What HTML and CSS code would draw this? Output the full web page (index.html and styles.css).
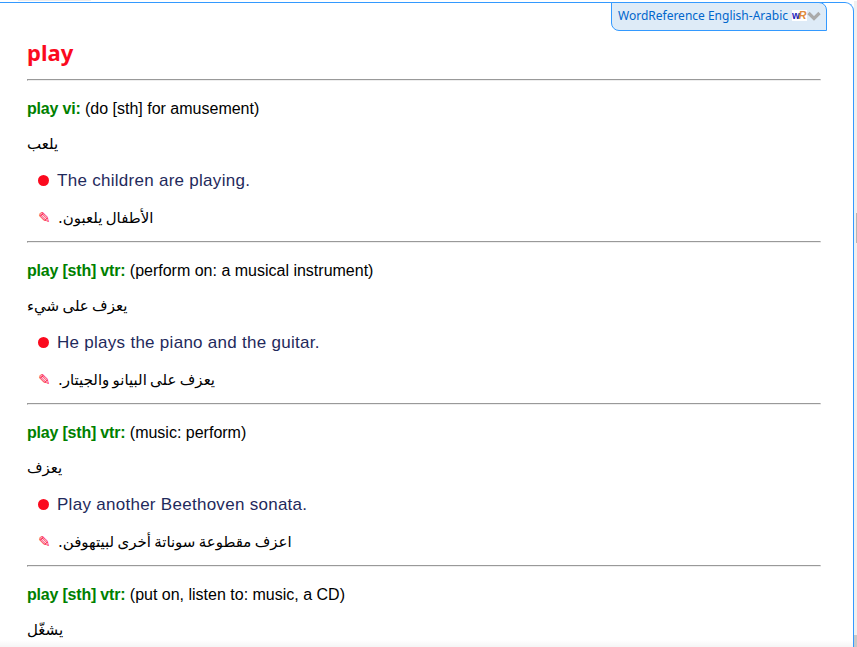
FILE: index.html
```
<!DOCTYPE html>
<html lang="en">
<head>
    <meta charset="UTF-8">
    <title>play - WordReference English-Arabic</title>
    <link rel="stylesheet" href="styles.css">
</head>
<body>
    <div class="top-strip"></div>
    <div class="article-box">
        <div class="dict-label">
            <span>WordReference English-Arabic</span>
            <svg class="dict-icon" width="15" height="11" viewBox="0 0 15 11">
                <rect width="15" height="11" fill="#fff"/>
                <text x="0" y="8.5" class="icon-w">w</text>
                <text x="6.5" y="9" class="icon-r">R</text>
            </svg>
            <svg class="arrow" width="14" height="10" viewBox="0 0 14 10">
                <path d="M1.5 2 L7 7.5 L12.5 2" fill="none" stroke="#aaa" stroke-width="3.2"/>
            </svg>
        </div>
        <div class="article">
            <h1>play</h1>
            <hr>
            <div class="entry">
                <p><b>play vi:</b> (do [sth] for amusement)</p>
                <p class="ar word" lang="ar"><bdi dir="rtl">يلعب</bdi></p>
                <p class="example"><i class="dot"></i>The children are playing.</p>
                <p class="ar translation" lang="ar"><i class="pencil">✎</i><bdi dir="rtl">الأطفال يلعبون.</bdi></p>
            </div>
            <hr>
            <div class="entry">
                <p><b>play [sth] vtr:</b> (perform on: a musical instrument)</p>
                <p class="ar word" lang="ar"><bdi dir="rtl">يعزف على شيء</bdi></p>
                <p class="example"><i class="dot"></i>He plays the piano and the guitar.</p>
                <p class="ar translation" lang="ar"><i class="pencil">✎</i><bdi dir="rtl">يعزف على البيانو والجيتار.</bdi></p>
            </div>
            <hr>
            <div class="entry">
                <p><b>play [sth] vtr:</b> (music: perform)</p>
                <p class="ar word" lang="ar"><bdi dir="rtl">يعزف</bdi></p>
                <p class="example"><i class="dot"></i>Play another Beethoven sonata.</p>
                <p class="ar translation" lang="ar"><i class="pencil">✎</i><bdi dir="rtl">اعزف مقطوعة سوناتة أخرى لبيتهوفن.</bdi></p>
            </div>
            <hr>
            <div class="entry">
                <p><b>play [sth] vtr:</b> (put on, listen to: music, a CD)</p>
                <p class="ar word" lang="ar"><bdi dir="rtl">يشغّل</bdi></p>
            </div>
        </div>
    </div>
    <div class="scrollbar"><div class="thumb"></div><div class="corner"></div></div>
    <div class="fade"></div>
</body>
</html>
```
FILE: styles.css
```
* {
    margin: 0;
    padding: 0;
    box-sizing: border-box;
}

body {
    height: 647px;
    overflow: hidden;
    background: #fff;
    color: #000;
    font: 16px "Liberation Sans", Arial, sans-serif;
}

.top-strip {
    width: 73px;
    height: 1px;
    margin-left: 18px;
    background: #ececee;
}

.article-box {
    width: 854px;
    height: 645px;
    margin-top: 1px;
    border-top: 1px solid #3399ff;
    border-right: 1px solid #3399ff;
    border-top-right-radius: 9px;
}

.dict-label {
    display: flex;
    align-items: center;
    width: 216px;
    height: 29px;
    margin: -1px 0 0 611px;
    padding: 0 5px 2px 6px;
    border: 1px solid #3399ff;
    border-radius: 0 8px 0 8px;
    background: #deebf7;
    color: #0066cc;
    font: 12px "Noto Sans", sans-serif;
    white-space: nowrap;
}

.dict-icon {
    flex: none;
    margin: -1px 0 0 4px;
}

.arrow {
    flex: none;
    margin-top: 1px;
}

.icon-w {
    font: bold 10px "Liberation Sans", sans-serif;
    fill: #2222bb;
}

.icon-r {
    font: italic bold 11px "Liberation Sans", sans-serif;
    fill: #e08a3c;
}

.article {
    width: 794px;
    margin-left: 27px;
}

h1 {
    height: 48px;
    color: #fb0a1e;
    font: bold 22px/42px "Noto Sans", sans-serif;
}

hr {
    height: 2px;
    border: 1px solid;
    border-color: #999 #eee #eee #999;
}

.entry {
    height: 160px;
    padding-top: 10px;
}

.entry:last-child {
    height: auto;
}

p {
    display: flex;
    align-items: center;
    height: 36px;
    white-space: pre;
}

b {
    color: #008000;
    letter-spacing: -0.2px;
}

.ar {
    font-family: "DejaVu Sans", sans-serif;
    font-size: 15px;
    word-spacing: -1.5px;
}

.word {
    padding-bottom: 2px;
}

.example {
    padding-left: 11px;
    color: #1f2a5c;
    font-size: 17px;
    letter-spacing: 0.28px;
}

.dot {
    width: 11px;
    height: 11px;
    margin: -2px 8px 0 0;
    border-radius: 50%;
    background: #fb0a1e;
}

.translation {
    height: 38px;
    padding-left: 11px;
}

.pencil {
    width: 20px;
    color: #fb0a3c;
    font: 15px "DejaVu Sans", sans-serif;
}

.scrollbar {
    position: absolute;
    top: 1px;
    right: 0;
    width: 3px;
    height: 646px;
    background: #f0f0f0;
}

.thumb {
    width: 1px;
    height: 30px;
    margin: 212px 0 0 2px;
    background: #b5b5b5;
}

.corner {
    height: 12px;
    margin-top: 392px;
    background: #c8c8c8;
}

.fade {
    position: absolute;
    left: 0;
    bottom: 0;
    width: 853px;
    height: 7px;
    background: linear-gradient(rgba(0, 0, 0, 0), rgba(0, 0, 0, 0.04));
}
```
